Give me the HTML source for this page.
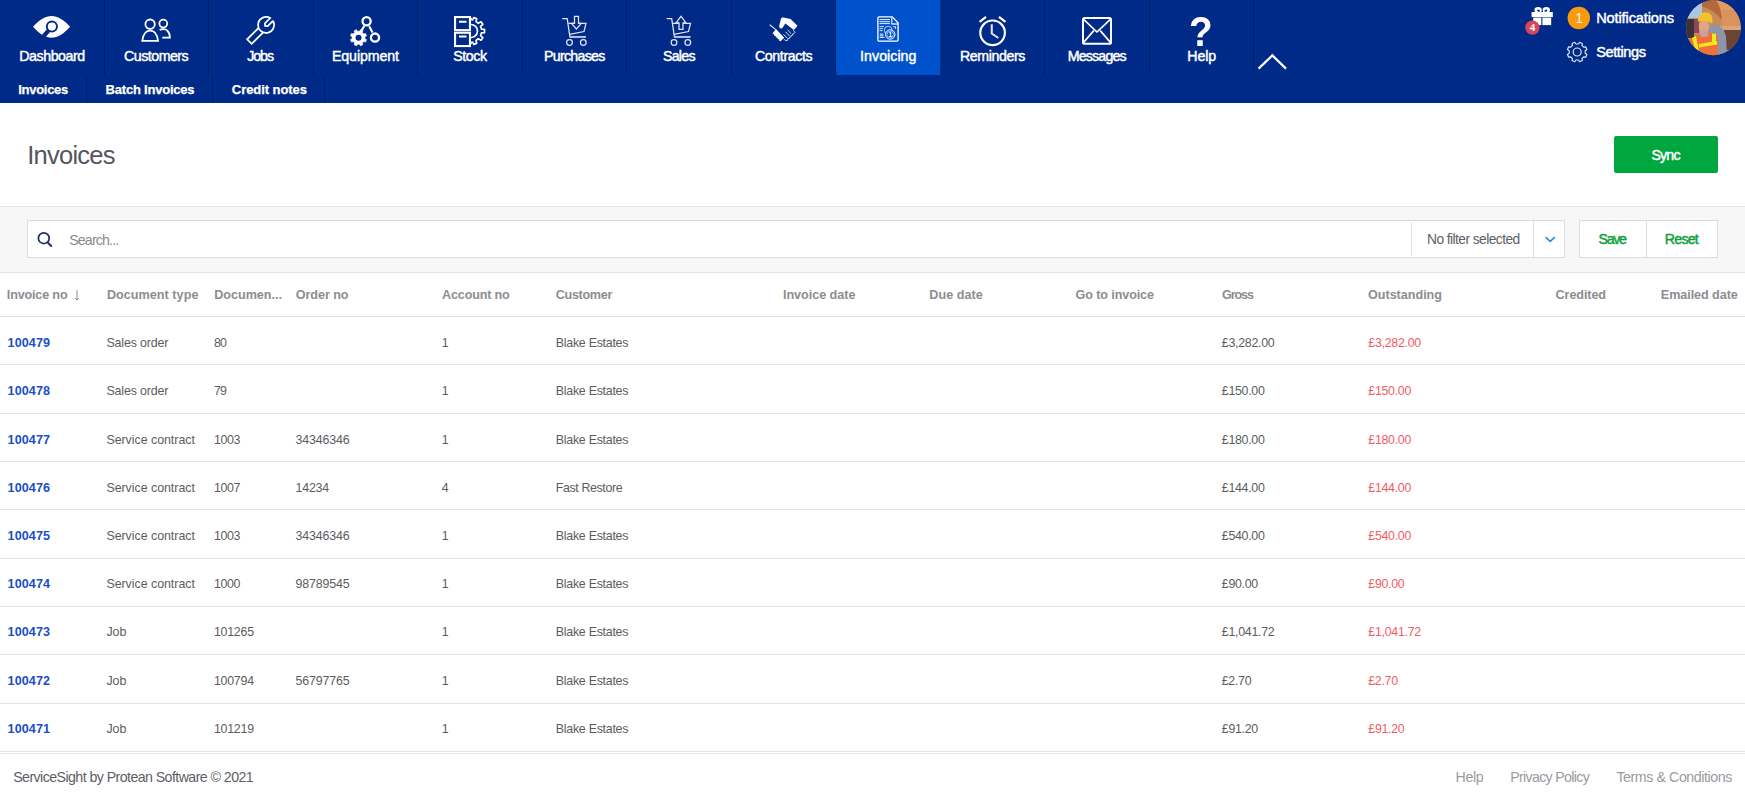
<!DOCTYPE html>
<html lang="en"><head><meta charset="utf-8"><title>Invoices - ServiceSight</title>
<style>
html,body{margin:0;padding:0;background:#fff;}
body{width:1745px;height:800px;position:relative;overflow:hidden;font-family:"Liberation Sans",Arial,sans-serif;color:#5c5c5e;}
.t{position:absolute;white-space:pre;line-height:1;margin:0;padding:0;text-decoration:none;}
.abs{position:absolute;}
header{position:absolute;left:0;top:0;width:1745px;height:103px;background:#002a87;}
.tab{position:absolute;top:0;height:75px;width:104.5px;box-sizing:border-box;border-right:1px solid rgba(0,10,60,.38);}
.tab.on{background:#0052cc;}
.sub{position:absolute;top:75px;height:28px;box-sizing:border-box;border-right:1px solid rgba(0,10,60,.38);}
header .t,header a.t{color:#fff;}
h1.t{font-weight:400;}
svg{position:absolute;overflow:visible;}
.row{position:absolute;left:0;width:1745px;height:48.33px;box-sizing:border-box;border-bottom:1px solid #e4e4e6;}
a.t{color:#1b4fc6;font-weight:700;}
.red{color:#f25c62;}
</style></head><body>
<header>
<nav>
<div class="tab" style="left:0.0px"></div>
<div class="tab" style="left:104.5px"></div>
<div class="tab" style="left:209.0px"></div>
<div class="tab" style="left:313.5px"></div>
<div class="tab" style="left:418.0px"></div>
<div class="tab" style="left:522.5px"></div>
<div class="tab" style="left:627.0px"></div>
<div class="tab" style="left:731.5px"></div>
<div class="tab on" style="left:836.0px"></div>
<div class="tab" style="left:940.5px"></div>
<div class="tab" style="left:1045.0px"></div>
<div class="tab" style="left:1149.5px"></div>
<a class="t" style="left:19.30px;top:49.02px;font-size:14.2px;letter-spacing:-0.440px;font-weight:400;-webkit-text-stroke:0.45px #fff;">Dashboard</a>
<a class="t" style="left:124.00px;top:49.02px;font-size:14.2px;letter-spacing:-0.487px;font-weight:400;-webkit-text-stroke:0.45px #fff;">Customers</a>
<a class="t" style="left:247.30px;top:49.02px;font-size:14.2px;letter-spacing:-1.090px;font-weight:400;-webkit-text-stroke:0.45px #fff;">Jobs</a>
<a class="t" style="left:332.00px;top:49.02px;font-size:14.2px;letter-spacing:-0.116px;font-weight:400;-webkit-text-stroke:0.45px #fff;">Equipment</a>
<a class="t" style="left:453.30px;top:49.02px;font-size:14.2px;letter-spacing:-0.446px;font-weight:400;-webkit-text-stroke:0.45px #fff;">Stock</a>
<a class="t" style="left:544.00px;top:49.02px;font-size:14.2px;letter-spacing:-0.704px;font-weight:400;-webkit-text-stroke:0.45px #fff;">Purchases</a>
<a class="t" style="left:662.90px;top:49.02px;font-size:14.2px;letter-spacing:-0.700px;font-weight:400;-webkit-text-stroke:0.45px #fff;">Sales</a>
<a class="t" style="left:754.90px;top:49.02px;font-size:14.2px;letter-spacing:-0.365px;font-weight:400;-webkit-text-stroke:0.45px #fff;">Contracts</a>
<a class="t" style="left:860.10px;top:49.02px;font-size:14.2px;letter-spacing:0.037px;font-weight:400;-webkit-text-stroke:0.45px #fff;">Invoicing</a>
<a class="t" style="left:960.00px;top:49.02px;font-size:14.2px;letter-spacing:-0.414px;font-weight:400;-webkit-text-stroke:0.45px #fff;">Reminders</a>
<a class="t" style="left:1067.70px;top:49.02px;font-size:14.2px;letter-spacing:-0.810px;font-weight:400;-webkit-text-stroke:0.45px #fff;">Messages</a>
<a class="t" style="left:1187.30px;top:49.02px;font-size:14.2px;letter-spacing:-0.129px;font-weight:400;-webkit-text-stroke:0.45px #fff;">Help</a>
</nav>
<div class="sub" style="left:0px;width:86.5px"></div>
<div class="sub" style="left:86.5px;width:126.5px"></div>
<div class="sub" style="left:213px;width:112.3px"></div>
<span class="t" style="left:18.30px;top:83.02px;font-size:13px;letter-spacing:-0.290px;font-weight:700;-webkit-text-stroke:0.25px #fff;">Invoices</span>
<span class="t" style="left:105.60px;top:83.02px;font-size:13px;letter-spacing:-0.213px;font-weight:700;-webkit-text-stroke:0.25px #fff;">Batch Invoices</span>
<span class="t" style="left:231.80px;top:83.02px;font-size:13px;letter-spacing:-0.059px;font-weight:700;-webkit-text-stroke:0.25px #fff;">Credit notes</span>
<span class="t" style="left:1596.20px;top:11.02px;font-size:14.6px;letter-spacing:-0.133px;-webkit-text-stroke:0.45px #fff;">Notifications</span>
<span class="t" style="left:1596.20px;top:45.02px;font-size:14.6px;letter-spacing:-0.419px;-webkit-text-stroke:0.45px #fff;">Settings</span>
<svg width="1745" height="103" viewBox="0 0 1745 103" style="left:0;top:0" fill="none" stroke="#fff" stroke-linecap="butt" stroke-linejoin="miter">
<g stroke="none" fill="#fff"><path d="M33 26.75 C39.5 19.5 45.5 15.9 51.5 15.9 C57.5 15.9 63.6 19.5 70.1 26.75 C63.6 34.1 57.5 37.75 51.5 37.75 C45.5 37.75 39.5 34.1 33 26.75 Z"/></g>
<circle cx="51.9" cy="26.6" r="5.05" stroke="#002a87" stroke-width="1.9" fill="#fff"/>
<path d="M48.9 30.2 L42.2 37.9" stroke="#002a87" stroke-width="4.2"/>
<g stroke-width="1.8"><circle cx="150.1" cy="24.2" r="4.7"/><path d="M142.3 40.8 C143.2 34 146 30.7 150.1 30.7 C154.2 30.7 157.2 34 158 40.8 Z"/><circle cx="163.3" cy="23.6" r="3.95"/><path d="M159.7 30.1 C162 28.6 165.5 28.8 167.3 30.6 C169.3 32.6 169.9 35 169.9 37.6 L162.3 37.6"/></g>
<g transform="translate(266.1 24.9) rotate(135)" stroke-width="1.75"><path d="M-7.76 -1.95 L-0.3 -1.95 L1.4 0 L-0.3 1.95 L-7.76 1.95 A8 8 0 1 0 -7.76 -1.95"/><path d="M7.6 -3.2 H23.6 V3.2 H7.6"/></g>
<g stroke-width="2.3"><circle cx="366.6" cy="21.25" r="4.1"/><circle cx="375" cy="37.6" r="4.1"/><path d="M364.2 25.9 L361.6 30.6 M369.2 26.2 L372.5 32.4" stroke-width="2.1"/></g>
<path d="M364.92 38.77 L366.57 39.69 L365.58 42.09 L363.76 41.57 L362.32 43.01 L362.84 44.83 L360.44 45.82 L359.52 44.17 L357.48 44.17 L356.56 45.82 L354.16 44.83 L354.68 43.01 L353.24 41.57 L351.42 42.09 L350.43 39.69 L352.08 38.77 L352.08 36.73 L350.43 35.81 L351.42 33.41 L353.24 33.93 L354.68 32.49 L354.16 30.67 L356.56 29.68 L357.48 31.33 L359.52 31.33 L360.44 29.68 L362.84 30.67 L362.32 32.49 L363.76 33.93 L365.58 33.41 L366.57 35.81 L364.92 36.73 Z" fill="#fff" stroke="#fff" stroke-width="0.6" stroke-linejoin="round"/><circle cx="358.5" cy="37.75" r="3" fill="#002a87" stroke="none"/>
<g stroke-width="2.1"><rect x="455.05" y="17.05" width="14.9" height="13.1"/><rect x="455.05" y="32.75" width="14.9" height="13.3"/><path d="M459 21.75 H466.5 M459 36.4 H466.5" stroke-width="2"/></g>
<g stroke-width="1.7" stroke-linejoin="round"><path d="M471 24.5 A6.5 6.5 0 0 1 471 37.5"/><path d="M472.38 20.49 L473.71 17.67 L476.64 18.62 L476.06 21.68 L478.30 23.31 L481.03 21.81 L482.84 24.30 L480.57 26.44 L481.42 29.07 L484.51 29.46 L484.51 32.54 L481.42 32.93 L480.57 35.56 L482.84 37.70 L481.03 40.19 L478.30 38.69 L476.06 40.32 L476.64 43.38 L473.71 44.33 L472.38 41.51 "/><path d="M471 17.8 V20.6 M471 41.4 V44.2"/></g>
<g transform="translate(0 0)" stroke="#dfe5f3" stroke-width="1.25"><path d="M562.2 18.6 H567.2 L569.9 36.9 H585.9" /><path d="M569.9 36.9 H585.9" stroke-width="1.9" stroke="#b9c3e0"/><path d="M568.3 23.3 H586 L584 31.5 L569.5 34.3"/><circle cx="569.5" cy="42.4" r="2.85"/><circle cx="583.3" cy="42.4" r="2.85"/><path d="M574.5 23.3 V16.3 H578.5 V23.3 H581.3 L576.4 29 L571.5 23.3 Z" fill="#002a87"/></g>
<g transform="translate(104.5 0)" stroke="#dfe5f3" stroke-width="1.25"><path d="M562.2 18.6 H567.2 L569.9 36.9 H585.9" /><path d="M569.9 36.9 H585.9" stroke-width="1.9" stroke="#b9c3e0"/><path d="M568.3 23.3 H586 L584 31.5 L569.5 34.3"/><circle cx="569.5" cy="42.4" r="2.85"/><circle cx="583.3" cy="42.4" r="2.85"/><path d="M574.5 22.75 V29.25 H578.5 V22.75 H581.5 L576.5 16.3 L571.5 22.75 Z" fill="#002a87"/></g>
<g stroke="none" fill="#fff"><path d="M779 26.6 L780.9 18.9 Q781.5 17.2 783.4 17.5 L790.6 19.1 L797.5 25.7 L793.9 30 L785.3 23.5 L782.4 27.9 Q780.4 29.8 779 26.6 Z"/><path d="M776 29 L784.2 37.7 L780.6 41.2 L779.4 40.9 L779.3 39.6 L777.6 39.1 L777.5 37.8 L775.8 37.3 L775.7 36 L774 35.5 L773.9 34.2 L772.4 33.4 Z"/></g>
<path d="M769.7 24.7 L775.8 29.6" stroke="#e6ebf6" stroke-width="1.1"/>
<g stroke="#e3e9f6" stroke-width="1" stroke-linecap="round"><path d="M787.9 30.3 L790.9 33.3 M785.8 32.1 L789.4 35.9 M783.8 34.6 L787.6 38.4"/><path d="M793.6 30.6 L794.9 32.3 L793.6 33.9 L792.6 34 L792.4 35.3 L791.2 35.5 L791 36.8 L789.8 37 L789.5 38.3 L788.3 38.6 L787.4 40.4 Q785.8 41.3 784.4 39.7" stroke-width="0.95" stroke-linejoin="round"/></g>
<g stroke-width="1.3" stroke-linejoin="round"><path d="M878.9 16.9 H892.3 L898.1 23 V40 Q898.1 41.1 897 41.1 H878.9 Q877.9 41.1 877.9 40 V18 Q877.9 16.9 878.9 16.9 Z"/><path d="M891.8 17 V24 H898" stroke="#d5def5"/></g>
<g stroke="#e8eefb" stroke-width="1"><path d="M879.5 19.6 H890 M879.5 21.7 H890 M879.5 23.6 H890"/><path d="M879.5 26.6 H884 M879.5 28.6 H883 M879.5 30.6 H882.6 M893 26.8 H896 M895.6 27 V29" stroke-width="0.9"/><path d="M879.6 37.4 H884.4"/></g>
<rect x="879.8" y="33.4" width="3.6" height="3.2" fill="#9db6ee" stroke="none"/>
<circle cx="888.25" cy="30.2" r="3.9" stroke="#cfdaf5" stroke-width="0.9"/><circle cx="890.25" cy="34.5" r="4.7" fill="#0052cc" stroke-width="1"/><circle cx="890.25" cy="34.5" r="3.3" stroke="#d7e0f7" stroke-width="0.7"/><text x="890.3" y="36.9" font-family="Liberation Sans, Arial, sans-serif" font-size="6.4" font-weight="700" text-anchor="middle" fill="#fff" stroke="none">1</text>
<g stroke-width="2.2"><circle cx="992.6" cy="32.8" r="12.3"/><path d="M979.6 21.9 L986 16.9 M999 16.9 L1005.4 21.9"/><path d="M991.75 24.25 V33.5 L998.4 38" stroke="#dde3f2" stroke-width="2.1"/></g>
<g stroke-width="2" stroke-linejoin="round"><rect x="1083" y="18" width="28" height="25.75" rx="1.6"/><path d="M1083.4 19.2 L1096.9 32 L1110.6 19.2 M1083.6 42.4 L1093.8 30.6 M1110.4 42.4 L1100.2 30.6" stroke-width="1.7"/></g>
<path d="M1258.6 68.6 L1272.3 55.4 L1286 68.6" stroke-width="2.2"/>
<g stroke="none" fill="#fff"><ellipse cx="1538.1" cy="9.9" rx="3.7" ry="3"/><ellipse cx="1546.3" cy="9.9" rx="3.7" ry="3"/><ellipse cx="1538.5" cy="10.6" rx="1.5" ry="1.05" fill="#002a87" transform="rotate(25 1538.5 10.6)"/><ellipse cx="1545.9" cy="10.6" rx="1.5" ry="1.05" fill="#002a87" transform="rotate(-25 1545.9 10.6)"/><rect x="1531.6" y="12" width="21.2" height="5.1"/><rect x="1533.2" y="17.6" width="8.1" height="7.5"/><rect x="1542.4" y="17.6" width="8.8" height="7.5"/></g>
<circle cx="1532.4" cy="27.6" r="7.2" fill="#d64558" stroke="none"/>
<circle cx="1578.8" cy="18" r="11.2" fill="#f99b0c" stroke="none"/>
<g stroke="#dfe5f3" stroke-width="1.2" stroke-linejoin="round"><path d="M1585.21 53.20 L1586.90 54.42 L1585.77 57.15 L1583.71 56.82 L1582.02 58.51 L1582.35 60.57 L1579.62 61.70 L1578.40 60.01 L1576.00 60.01 L1574.78 61.70 L1572.05 60.57 L1572.38 58.51 L1570.69 56.82 L1568.63 57.15 L1567.50 54.42 L1569.19 53.20 L1569.19 50.80 L1567.50 49.58 L1568.63 46.85 L1570.69 47.18 L1572.38 45.49 L1572.05 43.43 L1574.78 42.30 L1576.00 43.99 L1578.40 43.99 L1579.62 42.30 L1582.35 43.43 L1582.02 45.49 L1583.71 47.18 L1585.77 46.85 L1586.90 49.58 L1585.21 50.80 Z"/><circle cx="1577.2" cy="52" r="4"/></g>
<clipPath id="av"><circle cx="1713.4" cy="27.75" r="27.4"/></clipPath>
<filter id="bl" x="-10%" y="-10%" width="120%" height="120%"><feGaussianBlur stdDeviation="0.7"/></filter>
<g clip-path="url(#av)" stroke="none"><rect x="1684" y="-2" width="60" height="60" fill="#c98a5a"/><g filter="url(#bl)"><rect x="1686" y="0" width="56" height="56" fill="#c98a5a"/><path d="M1700 0 H1742 V20 H1722 Q1712 8 1700 6 Z" fill="#b5683a"/><path d="M1716 0 H1742 V22 L1722 24 Q1722 8 1716 0Z" fill="#e39a5e"/><rect x="1722" y="10" width="20" height="16" fill="#d8935f"/><rect x="1720" y="26" width="22" height="6" fill="#d9a77f"/><rect x="1724" y="30" width="18" height="20" fill="#6a4430"/><path d="M1686 0 H1702 V18 H1686 Z" fill="#a9c6e6"/><rect x="1686" y="19" width="8" height="19" fill="#3b3236"/><rect x="1694" y="19" width="5" height="14" fill="#8a4a58"/><path d="M1709 26 Q1722 22 1726 36 L1727 56 H1716 L1717 38 Q1716 31 1709 32 Z" fill="#8c96ab"/><path d="M1689 40 L1698 34 L1712 33 L1718 36 L1718 56 H1694 Z" fill="#f0703a"/><path d="M1692 38 L1696 36 L1699 52 L1696 52 Z M1712 33.5 L1716 34 L1716 45 L1712 45 Z" fill="#e6f01e"/><path d="M1699 44 L1717 41 L1717 44.5 L1699 47.5 Z" fill="#f0e81e"/><ellipse cx="1704" cy="26.5" rx="5.2" ry="6.6" fill="#e0a684"/><path d="M1700 31 H1708 V36 Q1704 38 1700 36 Z" fill="#c9a0a0"/><path d="M1697.6 21.4 Q1698.4 12.2 1706 12.2 Q1712.6 12.8 1712.4 20 L1712.6 23.4 Q1705 19.4 1697.6 21.4 Z" fill="#f1c12d"/></g></g>
</svg>
<span class="t" style="left:1188.60px;top:10.02px;font-size:43px;font-weight:700;transform:scaleX(0.9);transform-origin:0 0;">?</span>
<span class="t" style="left:1529.70px;top:22.02px;font-size:11px;font-weight:700;font-family:'Liberation Serif',serif;">4</span>
<span class="t" style="left:1575.20px;top:11.02px;font-size:14px;color:#ffefe0;">1</span>
</header>
<main>
<h1 class="t" style="left:27.20px;top:143.02px;font-size:25.5px;letter-spacing:-0.750px;font-weight:400;color:#55555f;">Invoices</h1>
<div class="abs" style="left:1614.2px;top:135.7px;width:103.5px;height:37.6px;background:#00a63e;border-radius:2px"></div>
<span class="t" style="left:1651.50px;top:148.02px;font-size:14.2px;letter-spacing:-0.849px;color:#fff;-webkit-text-stroke:0.45px #fff;">Sync</span>
<div class="abs" style="left:0;top:205.5px;width:1745px;height:67px;background:#f7f7f7;box-sizing:border-box;border-top:1px solid #e6e6e6;border-bottom:1px solid #e3e3e3"></div>
<div class="abs" style="left:27px;top:220.2px;width:1537.7px;height:37.4px;background:#fff;box-sizing:border-box;border:1px solid #dcdcdc"></div>
<div class="abs" style="left:1410.6px;top:222px;width:1px;height:34px;background:#e2e2e2"></div>
<div class="abs" style="left:1532.5px;top:221px;width:1px;height:36px;background:#dcdcdc"></div>
<div class="abs" style="left:1578.8px;top:220.2px;width:138.9px;height:37.4px;background:#fff;box-sizing:border-box;border:1px solid #dcdcdc"></div>
<div class="abs" style="left:1646.4px;top:221px;width:1px;height:36px;background:#dcdcdc"></div>
<span class="t" style="left:69.20px;top:233.02px;font-size:14.2px;letter-spacing:-0.848px;color:#8a8a8a;">Search...</span>
<span class="t" style="left:1427.00px;top:233.02px;font-size:13.8px;letter-spacing:-0.563px;color:#606066;">No filter selected</span>
<span class="t" style="left:1598.60px;top:232.02px;font-size:14.2px;letter-spacing:-1.381px;color:#10a040;-webkit-text-stroke:0.45px #10a040;">Save</span>
<span class="t" style="left:1664.80px;top:232.02px;font-size:14.2px;letter-spacing:-0.766px;color:#10a040;-webkit-text-stroke:0.45px #10a040;">Reset</span>
<svg style="left:35px;top:229px" width="20" height="20" viewBox="35 229 20 20"><circle cx="43.8" cy="238.2" r="5.4" fill="none" stroke="#1c2e5c" stroke-width="1.7"/><path d="M47.6 242.4 L51.2 246" stroke="#1c2e5c" stroke-width="2" stroke-linecap="round"/></svg>
<svg style="left:1544px;top:235px" width="12" height="8" viewBox="1544 235 12 8"><path d="M1545.6 237.2 L1550.2 241.4 L1554.8 237.2" fill="none" stroke="#2b8be0" stroke-width="1.6"/></svg>
<div class="row" style="top:272.5px;height:44.5px;border-bottom-color:#e0e0e2">
<span class="t" style="left:6.80px;top:16.52px;font-size:12.6px;letter-spacing:-0.165px;font-weight:700;color:#8d8d8f;">Invoice no</span>
<span class="t" style="left:106.90px;top:16.52px;font-size:12.6px;letter-spacing:0.044px;font-weight:700;color:#8d8d8f;">Document type</span>
<span class="t" style="left:214.30px;top:16.52px;font-size:12.6px;letter-spacing:-0.032px;font-weight:700;color:#8d8d8f;">Documen...</span>
<span class="t" style="left:295.80px;top:16.52px;font-size:12.6px;letter-spacing:-0.070px;font-weight:700;color:#8d8d8f;">Order no</span>
<span class="t" style="left:442.10px;top:16.52px;font-size:12.6px;letter-spacing:-0.185px;font-weight:700;color:#8d8d8f;">Account no</span>
<span class="t" style="left:555.80px;top:16.52px;font-size:12.6px;letter-spacing:-0.326px;font-weight:700;color:#8d8d8f;">Customer</span>
<span class="t" style="left:783.00px;top:16.52px;font-size:12.6px;letter-spacing:-0.036px;font-weight:700;color:#8d8d8f;">Invoice date</span>
<span class="t" style="left:929.30px;top:16.52px;font-size:12.6px;letter-spacing:0.045px;font-weight:700;color:#8d8d8f;">Due date</span>
<span class="t" style="left:1075.60px;top:16.52px;font-size:12.6px;letter-spacing:-0.115px;font-weight:700;color:#8d8d8f;">Go to invoice</span>
<span class="t" style="left:1222.00px;top:16.52px;font-size:12.6px;letter-spacing:-1.102px;font-weight:700;color:#8d8d8f;">Gross</span>
<span class="t" style="left:1368.00px;top:16.52px;font-size:12.6px;letter-spacing:-0.016px;font-weight:700;color:#8d8d8f;">Outstanding</span>
<span class="t" style="left:1555.60px;top:16.52px;font-size:12.6px;letter-spacing:-0.099px;font-weight:700;color:#8d8d8f;">Credited</span>
<span class="t" style="left:1660.80px;top:16.52px;font-size:12.6px;letter-spacing:-0.064px;font-weight:700;color:#8d8d8f;">Emailed date</span>
<svg style="left:74px;top:15px" width="8" height="14" viewBox="74 287 8 14"><path d="M77 289.2 V299 M75.2 297 L77 299.2 L78.8 297" fill="none" stroke="#8d8d8f" stroke-width="1"/></svg>
</div>
<div class="row" style="top:317.00px">
<a class="t" style="left:7.60px;top:20.02px;font-size:12.6px;letter-spacing:0.074px;font-weight:700;">100479</a>
<span class="t" style="left:106.40px;top:20.02px;font-size:12.4px;letter-spacing:-0.138px;">Sales order</span>
<span class="t" style="left:213.90px;top:20.02px;font-size:12.4px;letter-spacing:-0.797px;">80</span>
<span class="t" style="left:441.80px;top:20.02px;font-size:12.4px;">1</span>
<span class="t" style="left:555.80px;top:20.02px;font-size:12.4px;letter-spacing:-0.264px;">Blake Estates</span>
<span class="t" style="left:1221.80px;top:20.02px;font-size:12.4px;letter-spacing:-0.278px;">£3,282.00</span>
<span class="t red" style="left:1368.30px;top:20.02px;font-size:12.4px;letter-spacing:-0.278px;">£3,282.00</span>
</div>
<div class="row" style="top:365.33px">
<a class="t" style="left:7.60px;top:19.69px;font-size:12.6px;letter-spacing:0.074px;font-weight:700;">100478</a>
<span class="t" style="left:106.40px;top:19.69px;font-size:12.4px;letter-spacing:-0.138px;">Sales order</span>
<span class="t" style="left:213.90px;top:19.69px;font-size:12.4px;letter-spacing:-0.797px;">79</span>
<span class="t" style="left:441.80px;top:19.69px;font-size:12.4px;">1</span>
<span class="t" style="left:555.80px;top:19.69px;font-size:12.4px;letter-spacing:-0.264px;">Blake Estates</span>
<span class="t" style="left:1221.80px;top:19.69px;font-size:12.4px;letter-spacing:-0.301px;">£150.00</span>
<span class="t red" style="left:1368.30px;top:19.69px;font-size:12.4px;letter-spacing:-0.301px;">£150.00</span>
</div>
<div class="row" style="top:413.66px">
<a class="t" style="left:7.60px;top:20.36px;font-size:12.6px;letter-spacing:0.074px;font-weight:700;">100477</a>
<span class="t" style="left:106.40px;top:20.36px;font-size:12.4px;letter-spacing:-0.023px;">Service contract</span>
<span class="t" style="left:213.90px;top:20.36px;font-size:12.4px;letter-spacing:-0.326px;">1003</span>
<span class="t" style="left:295.60px;top:20.36px;font-size:12.4px;letter-spacing:-0.169px;">34346346</span>
<span class="t" style="left:441.80px;top:20.36px;font-size:12.4px;">1</span>
<span class="t" style="left:555.80px;top:20.36px;font-size:12.4px;letter-spacing:-0.264px;">Blake Estates</span>
<span class="t" style="left:1221.80px;top:20.36px;font-size:12.4px;letter-spacing:-0.301px;">£180.00</span>
<span class="t red" style="left:1368.30px;top:20.36px;font-size:12.4px;letter-spacing:-0.301px;">£180.00</span>
</div>
<div class="row" style="top:461.99px">
<a class="t" style="left:7.60px;top:20.03px;font-size:12.6px;letter-spacing:0.074px;font-weight:700;">100476</a>
<span class="t" style="left:106.40px;top:20.03px;font-size:12.4px;letter-spacing:-0.023px;">Service contract</span>
<span class="t" style="left:213.90px;top:20.03px;font-size:12.4px;letter-spacing:-0.326px;">1007</span>
<span class="t" style="left:295.60px;top:20.03px;font-size:12.4px;letter-spacing:-0.242px;">14234</span>
<span class="t" style="left:441.80px;top:20.03px;font-size:12.4px;">4</span>
<span class="t" style="left:555.80px;top:20.03px;font-size:12.4px;letter-spacing:-0.376px;">Fast Restore</span>
<span class="t" style="left:1221.80px;top:20.03px;font-size:12.4px;letter-spacing:-0.301px;">£144.00</span>
<span class="t red" style="left:1368.30px;top:20.03px;font-size:12.4px;letter-spacing:-0.301px;">£144.00</span>
</div>
<div class="row" style="top:510.32px">
<a class="t" style="left:7.60px;top:19.70px;font-size:12.6px;letter-spacing:0.074px;font-weight:700;">100475</a>
<span class="t" style="left:106.40px;top:19.70px;font-size:12.4px;letter-spacing:-0.023px;">Service contract</span>
<span class="t" style="left:213.90px;top:19.70px;font-size:12.4px;letter-spacing:-0.326px;">1003</span>
<span class="t" style="left:295.60px;top:19.70px;font-size:12.4px;letter-spacing:-0.169px;">34346346</span>
<span class="t" style="left:441.80px;top:19.70px;font-size:12.4px;">1</span>
<span class="t" style="left:555.80px;top:19.70px;font-size:12.4px;letter-spacing:-0.264px;">Blake Estates</span>
<span class="t" style="left:1221.80px;top:19.70px;font-size:12.4px;letter-spacing:-0.301px;">£540.00</span>
<span class="t red" style="left:1368.30px;top:19.70px;font-size:12.4px;letter-spacing:-0.301px;">£540.00</span>
</div>
<div class="row" style="top:558.65px">
<a class="t" style="left:7.60px;top:19.37px;font-size:12.6px;letter-spacing:0.074px;font-weight:700;">100474</a>
<span class="t" style="left:106.40px;top:19.37px;font-size:12.4px;letter-spacing:-0.023px;">Service contract</span>
<span class="t" style="left:213.90px;top:19.37px;font-size:12.4px;letter-spacing:-0.326px;">1000</span>
<span class="t" style="left:295.60px;top:19.37px;font-size:12.4px;letter-spacing:-0.169px;">98789545</span>
<span class="t" style="left:441.80px;top:19.37px;font-size:12.4px;">1</span>
<span class="t" style="left:555.80px;top:19.37px;font-size:12.4px;letter-spacing:-0.264px;">Blake Estates</span>
<span class="t" style="left:1221.80px;top:19.37px;font-size:12.4px;letter-spacing:-0.306px;">£90.00</span>
<span class="t red" style="left:1368.30px;top:19.37px;font-size:12.4px;letter-spacing:-0.306px;">£90.00</span>
</div>
<div class="row" style="top:606.98px">
<a class="t" style="left:7.60px;top:19.04px;font-size:12.6px;letter-spacing:0.074px;font-weight:700;">100473</a>
<span class="t" style="left:106.40px;top:19.04px;font-size:12.4px;">Job</span>
<span class="t" style="left:213.90px;top:19.04px;font-size:12.4px;letter-spacing:-0.232px;">101265</span>
<span class="t" style="left:441.80px;top:19.04px;font-size:12.4px;">1</span>
<span class="t" style="left:555.80px;top:19.04px;font-size:12.4px;letter-spacing:-0.264px;">Blake Estates</span>
<span class="t" style="left:1221.80px;top:19.04px;font-size:12.4px;letter-spacing:-0.278px;">£1,041.72</span>
<span class="t red" style="left:1368.30px;top:19.04px;font-size:12.4px;letter-spacing:-0.278px;">£1,041.72</span>
</div>
<div class="row" style="top:655.31px">
<a class="t" style="left:7.60px;top:19.71px;font-size:12.6px;letter-spacing:0.074px;font-weight:700;">100472</a>
<span class="t" style="left:106.40px;top:19.71px;font-size:12.4px;">Job</span>
<span class="t" style="left:213.90px;top:19.71px;font-size:12.4px;letter-spacing:-0.232px;">100794</span>
<span class="t" style="left:295.60px;top:19.71px;font-size:12.4px;letter-spacing:-0.169px;">56797765</span>
<span class="t" style="left:441.80px;top:19.71px;font-size:12.4px;">1</span>
<span class="t" style="left:555.80px;top:19.71px;font-size:12.4px;letter-spacing:-0.264px;">Blake Estates</span>
<span class="t" style="left:1221.80px;top:19.71px;font-size:12.4px;letter-spacing:-0.313px;">£2.70</span>
<span class="t red" style="left:1368.30px;top:19.71px;font-size:12.4px;letter-spacing:-0.313px;">£2.70</span>
</div>
<div class="row" style="top:703.64px">
<a class="t" style="left:7.60px;top:19.38px;font-size:12.6px;letter-spacing:0.074px;font-weight:700;">100471</a>
<span class="t" style="left:106.40px;top:19.38px;font-size:12.4px;">Job</span>
<span class="t" style="left:213.90px;top:19.38px;font-size:12.4px;letter-spacing:-0.232px;">101219</span>
<span class="t" style="left:441.80px;top:19.38px;font-size:12.4px;">1</span>
<span class="t" style="left:555.80px;top:19.38px;font-size:12.4px;letter-spacing:-0.264px;">Blake Estates</span>
<span class="t" style="left:1221.80px;top:19.38px;font-size:12.4px;letter-spacing:-0.306px;">£91.20</span>
<span class="t red" style="left:1368.30px;top:19.38px;font-size:12.4px;letter-spacing:-0.306px;">£91.20</span>
</div>
</main>
<footer>
<div class="abs" style="left:0;top:753px;width:1745px;height:1px;background:#e8e8ea"></div>
<span class="t" style="left:13.20px;top:770.02px;font-size:14.2px;letter-spacing:-0.567px;color:#5e5e66;">ServiceSight by Protean Software © 2021</span>
<span class="t" style="left:1455.60px;top:770.02px;font-size:14.2px;letter-spacing:-0.396px;color:#9a9aa0;">Help</span>
<span class="t" style="left:1510.20px;top:770.02px;font-size:14.2px;letter-spacing:-0.670px;color:#9a9aa0;">Privacy Policy</span>
<span class="t" style="left:1616.40px;top:770.02px;font-size:14.2px;letter-spacing:-0.413px;color:#9a9aa0;">Terms &amp; Conditions</span>
</footer>
</body></html>
